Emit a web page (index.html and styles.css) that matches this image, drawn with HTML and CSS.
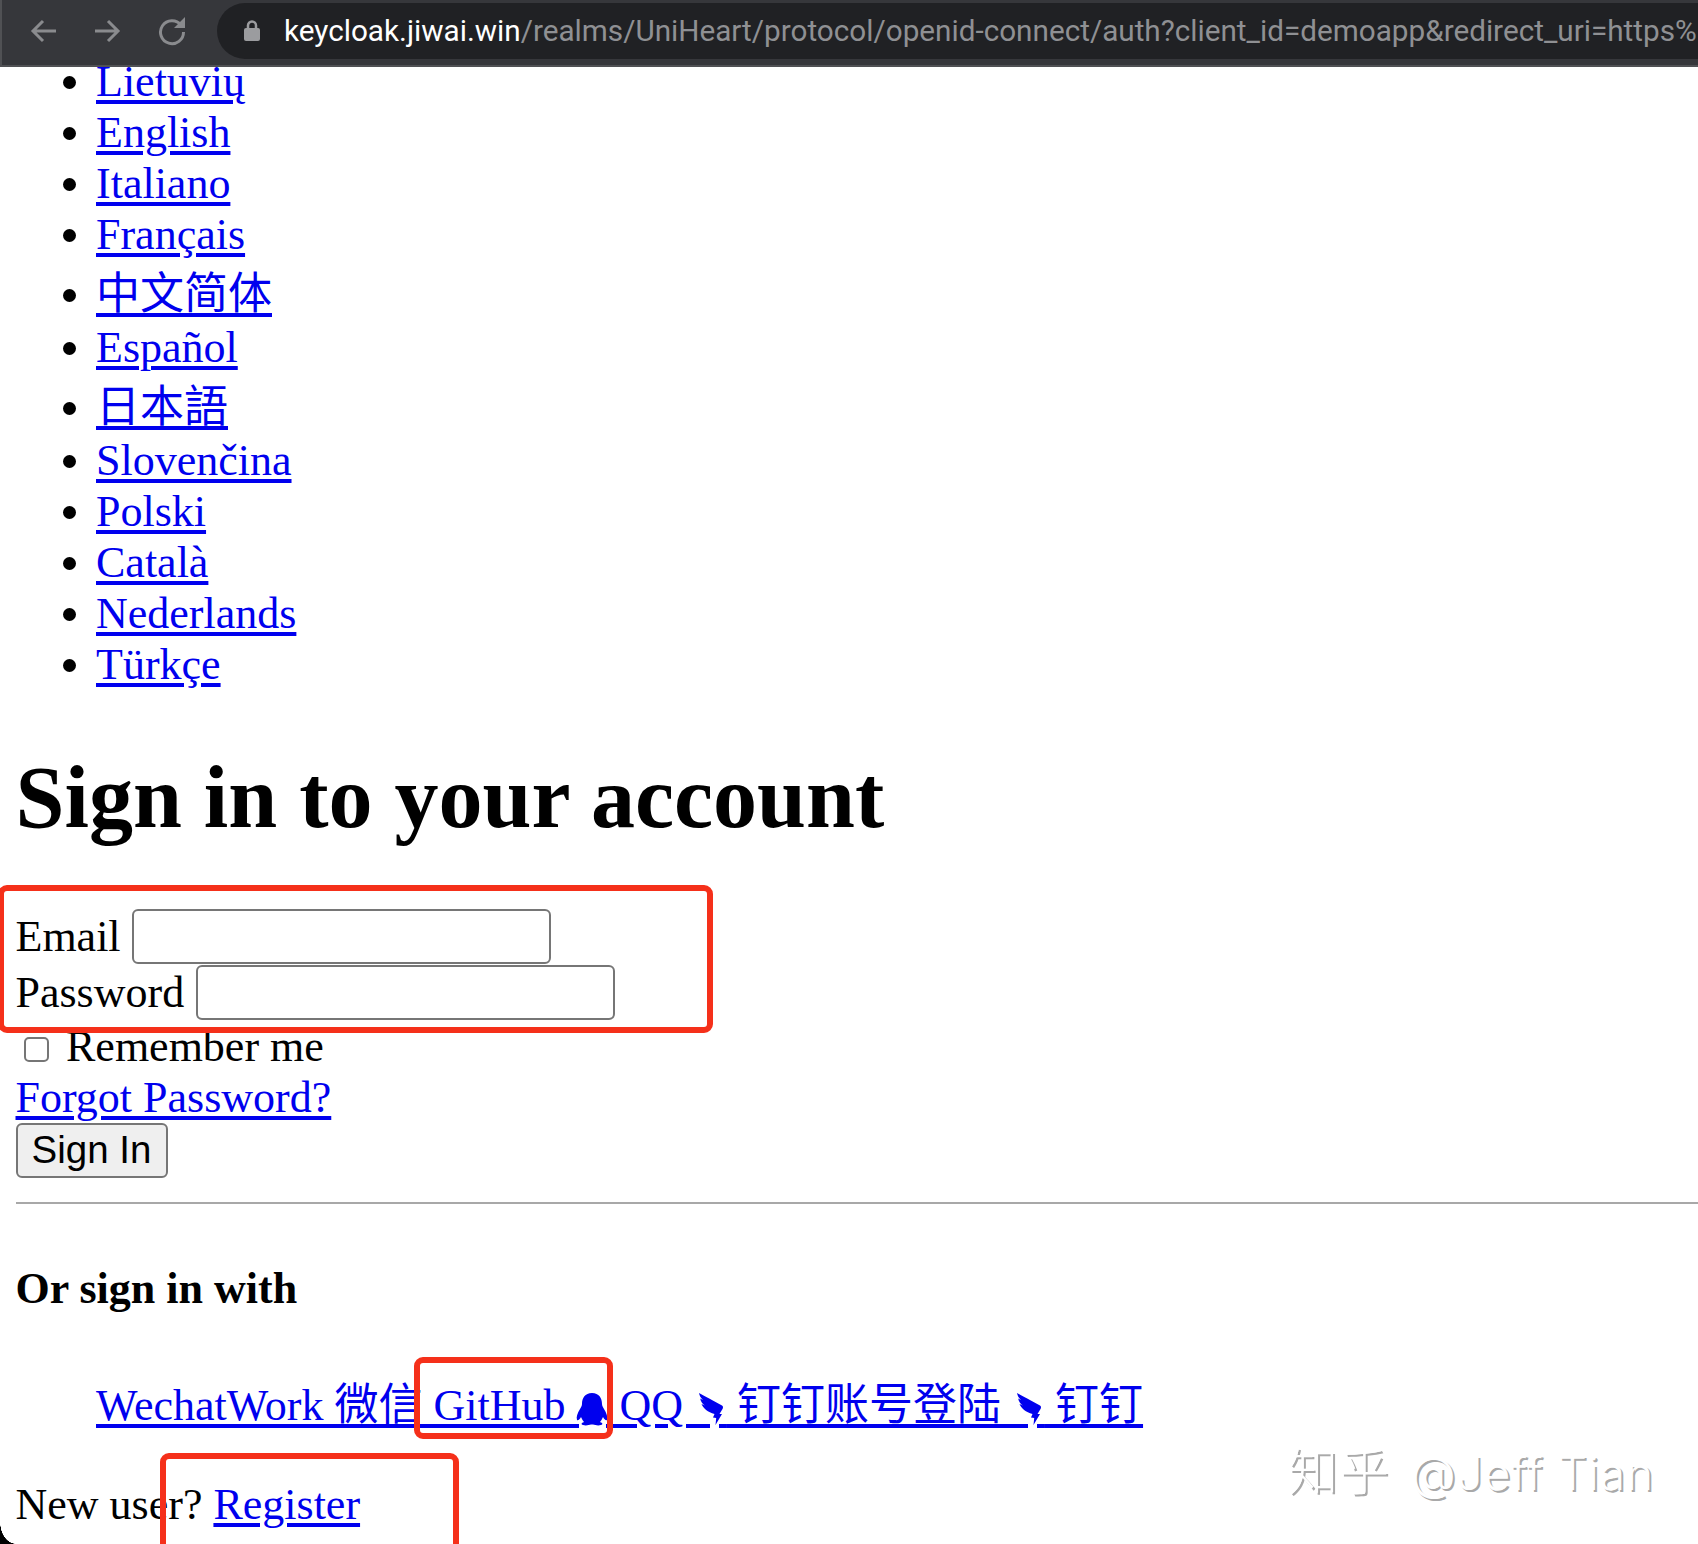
FILE: index.html
```html
<!DOCTYPE html>
<html lang="en">
<head>
<meta charset="utf-8">
<title>Sign in to your account</title>
<link rel="stylesheet" href="styles.css">
</head>
<body>
<header class="toolbar">
  <svg class="nav-icon" viewBox="0 0 30 30"><path d="M27 15H4M14 5L4 15l10 10"/></svg>
  <svg class="nav-icon" viewBox="0 0 30 30"><path d="M3 15h23M16 5l10 10-10 10"/></svg>
  <svg class="nav-icon reload" viewBox="0 0 30 30"><path d="M24 9A11.500 11.500 0 1 0 26.500 16"/><path class="fill" d="M17 12h11V1z"/></svg>
  <div class="omnibox">
    <svg class="lock" viewBox="0 0 18 22"><rect y="8" width="16" height="13" rx="2" class="lock-body"/><path d="M4 9V5.500a4 4 0 0 1 8 0V9" class="lock-arc"/></svg>
    <span class="url"><span class="host">keycloak.jiwai.win</span>/realms/UniHeart/protocol/openid-connect/auth?client_id=demoapp&amp;redirect_uri=https%</span>
  </div>
</header>
<main class="page">
  <ul class="locales">
    <li><a href="#">Lietuvių</a></li>
    <li><a href="#">English</a></li>
    <li><a href="#">Italiano</a></li>
    <li><a href="#">Français</a></li>
    <li class="cjk"><a href="#">中文简体</a></li>
    <li><a href="#">Español</a></li>
    <li class="cjk"><a href="#">日本語</a></li>
    <li><a href="#">Slovenčina</a></li>
    <li><a href="#">Polski</a></li>
    <li><a href="#">Català</a></li>
    <li><a href="#">Nederlands</a></li>
    <li><a href="#">Türkçe</a></li>
  </ul>
  <h1 class="title">Sign in to your account</h1>
  <form class="form">
    <div class="field"><label>Email</label> <input class="text-input" type="text"></div>
    <div class="field"><label>Password</label> <input class="text-input" type="password"></div>
    <div class="line line-first"><input class="check" type="checkbox"> <span>Remember me</span></div>
    <div class="line"><a href="#">Forgot Password?</a></div>
    <button class="submit" type="button">Sign In</button>
  </form>
  <hr class="rule">
  <h4 class="or">Or sign in with</h4>
  <div class="social"><a href="#">WechatWork 微信 GitHub <svg class="ico" viewBox="0 0 32 36"><path class="ul" d="M0 31h3v4H0zM30 31h2v4h-2z"/><path d="M16 0C9 0 6 5 6 11c0 2-1 3-2 5-2.500 4-4 8-3 11 1 1 3-1 4-3 1 2 2 4 3 5-3 1-3 2.500-1 3 3 1 6 0 8-.5h2c2 .5 5 1.500 8 .5 2-.5 2-2-1-3 1-1 2-3 3-5 1 2 3 4 4 3 1-3-.5-7-3-11-1-2-2-3-2-5 0-6-3-11-10-11z"/></svg> QQ <svg class="ico" viewBox="0 0 32 36"><path class="ul" d="M0 31h16v4H0zM25 31h7v4h-7z"/><path d="M5 0c7 4 15 8 23 12.500 1.500 1 1 2.500.5 3.500L25.500 21H28l-6.500 11 .7-7-3.200-.5 1.500-3.500c-6.500-1.500-11.500-6-13-10l3.500 1.500C8.500 11 6.500 8 6.200 5.500L9 7C7 5 5.500 3 5 0z"/></svg> 钉钉账号登陆 <svg class="ico" viewBox="0 0 32 36"><path class="ul" d="M0 31h16v4H0zM25 31h7v4h-7z"/><path d="M5 0c7 4 15 8 23 12.500 1.500 1 1 2.500.5 3.500L25.500 21H28l-6.500 11 .7-7-3.200-.5 1.500-3.500c-6.500-1.500-11.500-6-13-10l3.500 1.500C8.500 11 6.500 8 6.200 5.500L9 7C7 5 5.500 3 5 0z"/></svg> 钉钉</a></div>
  <p class="register">New user? <a href="#">Register</a></p>
</main>
<div class="mark mark-creds"></div>
<div class="mark mark-github"></div>
<div class="mark mark-register"></div>
<div class="watermark"><span class="wm-zh">知乎</span> @Jeff Tian</div>
<div class="corner"></div>
</body>
</html>
```
FILE: styles.css
```css
* { box-sizing: border-box; }
html, body { margin: 0; height: 100%; }
body {
  width: 1698px; height: 1544px; position: relative; overflow: hidden;
  background: #fff; color: #000;
  font: 44px/51px "Liberation Serif", "Noto Sans CJK SC", serif;
}
a { color: #0000ee; text-decoration-thickness: 4px; text-underline-offset: 4px; }

.toolbar {
  height: 67px; background: #36373b; border-bottom: 2px solid #505154; border-left: 2px solid #505154;
  display: flex; align-items: center; gap: 33px; padding: 0 0 4px 27px;
  position: relative; z-index: 1;
}
.nav-icon { width: 30px; height: 30px; fill: none; stroke: #8a8b8e; stroke-width: 3; flex: none; }
.nav-icon .fill { fill: #8a8b8e; stroke: none; }
.reload { margin-left: 2px; }
.omnibox {
  flex: 1; height: 56px; margin-left: -3px; background: #202124;
  border-radius: 28px 0 0 28px; display: flex; align-items: center; gap: 22px;
  padding-left: 27px; overflow: hidden; white-space: nowrap;
}
.lock { width: 18px; height: 22px; flex: none; }
.lock-body { fill: #9b9c9f; }
.lock-arc { fill: none; stroke: #9b9c9f; stroke-width: 2.500; }
.url { font: 29.700px/1 Roboto, "Liberation Sans", sans-serif; color: #8f9093; }
.host { color: #fff; }

.page { height: 1477px; overflow: hidden; padding: 0 0 0 15.500px; }
.locales { list-style: disc; margin: -11px 0 0; padding: 0 0 0 80.500px; }
.cjk { padding: 9px 0 2px; }
.title { font-size: 88px; line-height: 101px; font-weight: 700; margin: 57px 0 0; }
.form { margin-top: 60px; }
.field { height: 56px; display: flex; align-items: center; gap: 11.500px; }
.text-input {
  width: 419px; height: 55px; border: 2px solid #767676; border-radius: 6px; background: #fff; padding: 0; margin: 0;
}
.line { height: 51px; }
.line-first { margin-top: 1px; }
.check {
  appearance: none; width: 25px; height: 25px; border: 2px solid #767676; border-radius: 5px;
  margin: 0 6.500px 0 8px; vertical-align: -1px; background: #fff;
}
.submit {
  display: block; width: 152px; height: 55px; padding: 0; margin: 0;
  background: #efefef; border: 2px solid #767676; border-radius: 6px;
  font: 38.500px/1 "Liberation Sans", sans-serif; color: #000;
}
.rule { height: 2px; margin: 24px 0 0; border: 0; background: #a8a8a8; }
.or { font-size: 44px; line-height: 51px; font-weight: 700; margin: 59px 0 0; }
.social { margin: 66px 0 0; padding-left: 80.500px; white-space: nowrap; line-height: 51px; }
.ico { width: 32px; height: 36px; fill: #0000ee; vertical-align: -9px; }
.register { margin: 48px 0 0; }

.mark { position: absolute; border: 6px solid #f5301a; border-radius: 9px; }
.mark-creds { left: -2px; top: 885px; width: 715px; height: 148px; }
.mark-github { left: 414px; top: 1357px; width: 199px; height: 82px; }
.mark-register { left: 160px; top: 1453px; width: 299px; height: 110px; }

.watermark {
  position: absolute; left: 1288px; top: 1442px; white-space: nowrap;
  font: 300 46px/60px Inter, "Noto Sans CJK SC", sans-serif; letter-spacing: 1px;
  color: #fff; text-shadow: 2px 2px 0 #a9a9a9;
}
.wm-zh { font-size: 50px; margin-right: 7px; }
.corner {
  position: absolute; left: 0; bottom: 0; width: 16px; height: 22px;
  background: radial-gradient(ellipse 16px 22px at 100% 0, transparent 98%, #000 100%);
}
```
